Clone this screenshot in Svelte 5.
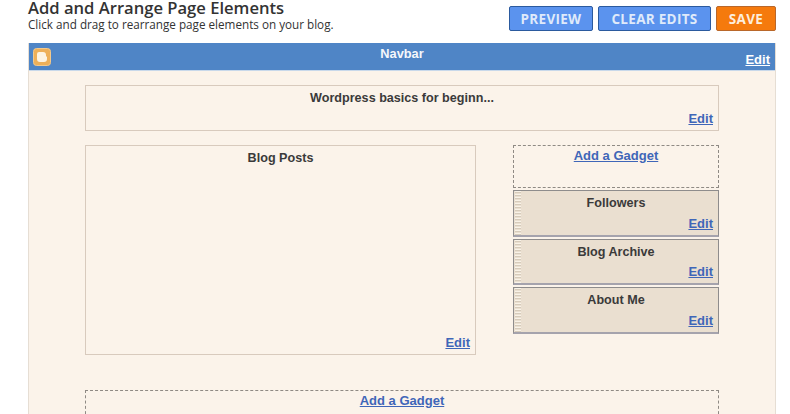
<script>
  const sidebarGadgets = ['Followers', 'Blog Archive', 'About Me'];
</script>

<main class="page">
  <header class="top">
    <div class="heading">
      <h1>Add and Arrange Page Elements</h1>
      <p>Click and drag to rearrange page elements on your blog.</p>
    </div>
    <div class="actions">
      <button class="btn blue preview">PREVIEW</button>
      <button class="btn blue clear">CLEAR EDITS</button>
      <button class="btn orange">SAVE</button>
    </div>
  </header>

  <section class="canvas">
    <div class="navbar">
      <svg class="logo" width="18" height="18" viewBox="0 0 18 18">
        <rect x="0.5" y="0.5" width="17" height="17" rx="3" fill="#eeb05a" stroke="#f3c98c" />
        <path d="M6 4h4a3 3 0 0 1 3 3v0.8a1 1 0 0 0 1 1v2.2a3 3 0 0 1-3 3H7a3 3 0 0 1-3-3V6a2 2 0 0 1 2-2z" fill="#fdf3e2" />
      </svg>
      <span class="nav-title">Navbar</span>
      <a class="edit nav-edit" href="#edit">Edit</a>
    </div>

    <div class="body">
      <div class="box header-box">
        <div class="title">Wordpress basics for beginn...</div>
        <a class="edit" href="#edit">Edit</a>
      </div>

      <div class="columns">
        <div class="box posts">
          <div class="title">Blog Posts</div>
          <a class="edit" href="#edit">Edit</a>
        </div>

        <div class="sidebar">
          <div class="add side-add"><a href="#add">Add a Gadget</a></div>
          {#each sidebarGadgets as name}
            <div class="gadget">
              <div class="title">{name}</div>
              <a class="edit" href="#edit">Edit</a>
            </div>
          {/each}
        </div>
      </div>

      <div class="add footer-add"><a href="#add">Add a Gadget</a></div>
    </div>
  </section>
</main>

<style>
  :global(body) {
    margin: 0;
    background: #fff;
    overflow: hidden;
  }

  .page {
    width: 790px;
    height: 414px;
    overflow: hidden;
    padding-left: 28px;
    box-sizing: border-box;
    font-family: "Liberation Sans", Arial, sans-serif;
  }

  .top {
    width: 748px;
    height: 43px;
    display: flex;
    justify-content: space-between;
    align-items: flex-start;
  }

  h1 {
    margin: 0;
    font-family: "Open Sans", sans-serif;
    font-size: 16.6px;
    font-weight: 600;
    line-height: 16px;
    color: #333;
  }

  p {
    margin: 0;
    font-family: "Open Sans", sans-serif;
    font-size: 11.7px;
    line-height: 16px;
    color: #333;
  }

  .actions {
    display: flex;
    gap: 5px;
    padding-top: 6px;
  }

  .btn {
    width: 60px;
    height: 25px;
    border: 1px solid #2b5a9e;
    border-radius: 2px;
    font-family: "Open Sans", sans-serif;
    font-size: 13.5px;
    font-weight: 700;
    letter-spacing: 0.3px;
    color: #dfeafa;
    box-sizing: border-box;
    padding: 0;
  }

  .blue {
    background: #5b93ee;
  }

  .preview {
    width: 84px;
  }

  .clear {
    width: 113px;
  }

  .orange {
    background: #f57a0d;
    border-color: #b9672a;
    color: #fdeedd;
  }

  .canvas {
    width: 748px;
    height: 371px;
    box-sizing: border-box;
    background: #fbf3ea;
    border-left: 1px solid #e6ded4;
    border-right: 1px solid #e6ded4;
  }

  .navbar {
    height: 28px;
    background: #4f85c6;
    border-bottom: 1px solid #c8d8ea;
    box-sizing: border-box;
    position: relative;
    display: flex;
    justify-content: center;
  }

  .logo {
    position: absolute;
    left: 4px;
    top: 5px;
  }

  .nav-title {
    font-size: 12.8px;
    font-weight: 700;
    line-height: 21px;
    color: #f4f7fb;
  }

  .body {
    padding: 14px 56px 0;
  }

  .box {
    box-sizing: border-box;
    border: 1px solid #d8cabd;
    display: flex;
    flex-direction: column;
    justify-content: space-between;
  }

  .header-box {
    width: 634px;
    height: 46px;
  }

  .title {
    text-align: center;
    font-size: 12.6px;
    font-weight: 700;
    line-height: 15px;
    padding-top: 5px;
    color: #3a3a3a;
  }

  .edit {
    align-self: flex-end;
    margin: 0 5px 3px 0;
    font-size: 13px;
    font-weight: 700;
    line-height: 16px;
    color: #3f66b8;
    text-decoration: underline;
  }

  .nav-edit {
    position: absolute;
    right: 5px;
    bottom: 2px;
    margin: 0;
    color: #fff;
  }

  .columns {
    display: flex;
    justify-content: space-between;
    width: 634px;
    margin-top: 14px;
  }

  .posts {
    width: 391px;
    height: 210px;
  }

  .sidebar {
    width: 206px;
    display: flex;
    flex-direction: column;
    gap: 2px;
  }

  .add {
    box-sizing: border-box;
    border: 1px dashed #8f8a84;
    text-align: center;
  }

  .add a {
    font-size: 13px;
    font-weight: 700;
    line-height: 18px;
    color: #3f66b8;
    text-decoration: underline;
  }

  .side-add {
    height: 43px;
  }

  .gadget {
    box-sizing: border-box;
    height: 46.5px;
    border: 1px solid #8e8c8c;
    border-bottom: 2px solid #a5a3ad;
    background-color: #eadfd0;
    background-image: repeating-linear-gradient(to bottom, #f8f2e8 0 1px, #d6cbbb 1px 2px, #eadfd0 2px 3px);
    background-size: 6px 100%;
    background-repeat: no-repeat;
    background-position: 1px 0;
    display: flex;
    flex-direction: column;
    justify-content: space-between;
  }

  .gadget .edit {
    margin-bottom: 3px;
  }

  .footer-add {
    width: 634px;
    height: 40px;
    margin-top: 35px;
  }
</style>
